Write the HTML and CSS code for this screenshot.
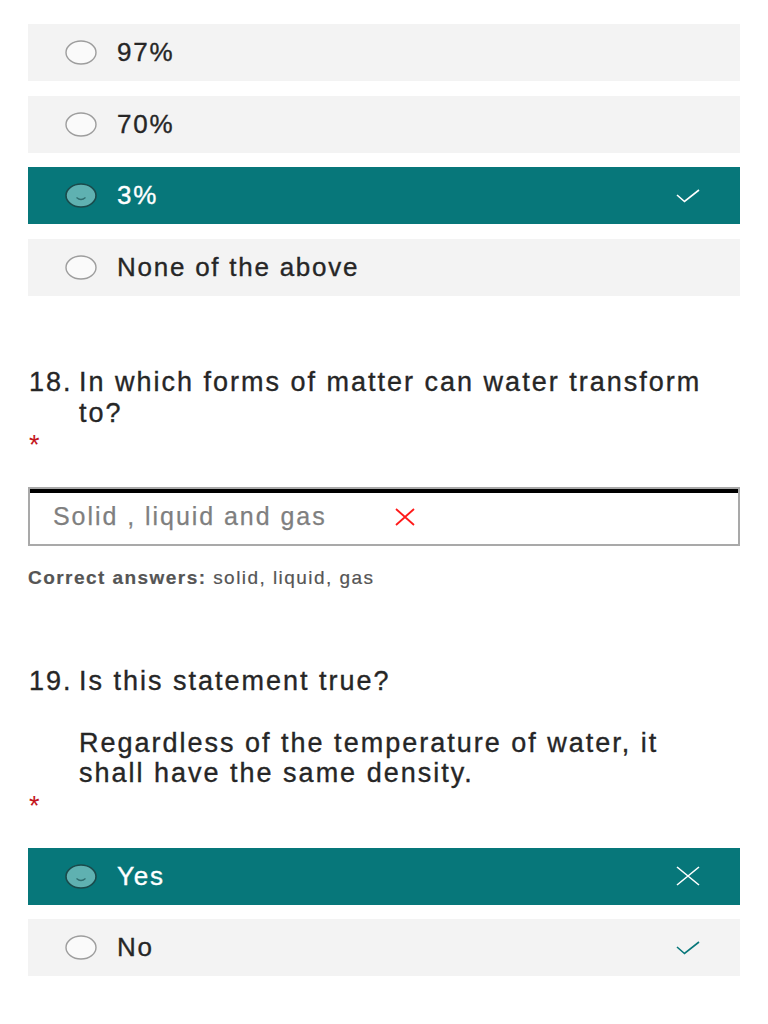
FILE: index.html
```html
<!DOCTYPE html>
<html lang="en">
<head>
<meta charset="utf-8">
<title>Quiz results</title>
<link rel="stylesheet" href="styles.css">
</head>
<body>
<div class="page">
  <div class="options">
    <div class="option">
      <svg class="radio" viewBox="0 0 32 25"><ellipse cx="16" cy="12.5" rx="15" ry="11.5" class="radio-off"/></svg>
      <span class="label">97%</span>
    </div>
    <div class="option">
      <svg class="radio" viewBox="0 0 32 25"><ellipse cx="16" cy="12.5" rx="15" ry="11.5" class="radio-off"/></svg>
      <span class="label">70%</span>
    </div>
    <div class="option selected">
      <svg class="radio" viewBox="0 0 32 25"><ellipse cx="16" cy="12.5" rx="15" ry="11.5" class="radio-on"/><path d="M11.5 14.5 Q16 18.5 20.5 14.5" class="radio-mark"/></svg>
      <span class="label">3%</span>
      <svg class="mark" viewBox="0 0 24 14"><path d="M1 6 L8.5 12.5 L23 1" class="stroke-white"/></svg>
    </div>
    <div class="option">
      <svg class="radio" viewBox="0 0 32 25"><ellipse cx="16" cy="12.5" rx="15" ry="11.5" class="radio-off"/></svg>
      <span class="label">None of the above</span>
    </div>
  </div>

  <div class="question q18">
    <span class="num">18.</span>
    <div class="qtext">In which forms of matter can water transform to?</div>
  </div>
  <div class="required">*</div>

  <div class="answer-box">
    <span class="answer-text">Solid , liquid and gas</span>
    <svg class="wrong" viewBox="0 0 20 18"><path d="M1 1 L19 17 M19 1 L1 17" class="stroke-red"/></svg>
  </div>
  <div class="correct"><b>Correct answers:</b> solid, liquid, gas</div>

  <div class="question q19">
    <span class="num">19.</span>
    <div class="qtext">
      <p>Is this statement true?</p>
      <p class="statement">Regardless of the temperature of water, it shall have the same density.</p>
    </div>
  </div>
  <div class="required">*</div>

  <div class="options options-q19">
    <div class="option selected">
      <svg class="radio" viewBox="0 0 32 25"><ellipse cx="16" cy="12.5" rx="15" ry="11.5" class="radio-on"/><path d="M11.5 14.5 Q16 18.5 20.5 14.5" class="radio-mark"/></svg>
      <span class="label">Yes</span>
      <svg class="mark mark-x" viewBox="0 0 24 20"><path d="M1 1 L23 19 M23 1 L1 19" class="stroke-white"/></svg>
    </div>
    <div class="option">
      <svg class="radio" viewBox="0 0 32 25"><ellipse cx="16" cy="12.5" rx="15" ry="11.5" class="radio-off"/></svg>
      <span class="label">No</span>
      <svg class="mark" viewBox="0 0 24 14"><path d="M1 6 L8.5 12.5 L23 1" class="stroke-teal"/></svg>
    </div>
  </div>
</div>
</body>
</html>
```

FILE: styles.css
```css
html, body {
  margin: 0;
  padding: 0;
  background: #ffffff;
}

body {
  font-family: "Liberation Sans", Arial, sans-serif;
  color: #262626;
}

.page {
  padding: 24px 28px 40px;
}

.options {
  display: flex;
  flex-direction: column;
  gap: 14.7px;
}

.option {
  height: 57px;
  background: #f3f3f3;
  display: flex;
  align-items: center;
  padding: 0 40px 0 37px;
}

.option.selected {
  background: #07777a;
  color: #ffffff;
}

.radio {
  width: 32px;
  height: 25px;
  flex: none;
  margin-right: 20px;
}

.radio-off {
  fill: #fafafa;
  stroke: #9d9d9d;
  stroke-width: 1.4;
}

.radio-on {
  fill: #5fb1b1;
  stroke: #1a4a4b;
  stroke-width: 1.6;
}

.radio-mark {
  fill: none;
  stroke: #2f6e6f;
  stroke-width: 1.2;
}

.label {
  font-size: 26px;
  letter-spacing: 1.75px;
  -webkit-text-stroke: 0.35px currentColor;
  flex: 1;
}

.mark {
  width: 24px;
  height: 14px;
  flex: none;
}

.mark-x {
  height: 20px;
}

.stroke-white {
  fill: none;
  stroke: #ffffff;
  stroke-width: 1.6;
}

.stroke-teal {
  fill: none;
  stroke: #07777a;
  stroke-width: 1.6;
}

.stroke-red {
  fill: none;
  stroke: #ff1a1a;
  stroke-width: 1.8;
}

.question {
  display: flex;
  font-size: 27px;
  letter-spacing: 2px;
  line-height: 30.5px;
  -webkit-text-stroke: 0.35px currentColor;
}

.q18 {
  margin-top: 71px;
}

.q19 {
  margin-top: 77px;
}

.num {
  width: 50px;
  flex: none;
  padding-left: 1px;
}

.qtext {
  flex: 1;
  padding-right: 20px;
}

.qtext p {
  margin: 0;
}

.qtext .statement {
  margin-top: 31px;
}

.required {
  color: #c4161c;
  font-size: 27px;
  line-height: 22px;
  height: 22px;
  margin-top: 6px;
  padding-left: 1px;
}

.answer-box {
  margin-top: 31px;
  height: 55px;
  border: 2px solid #a9a9a9;
  box-shadow: inset 0 4px 0 #000000;
  display: flex;
  align-items: center;
  padding: 0 0 0 23px;
}

.answer-text {
  font-size: 25px;
  letter-spacing: 1.95px;
  color: #7f7f7f;
  -webkit-text-stroke: 0.25px currentColor;
}

.wrong {
  width: 20px;
  height: 18px;
  margin-left: 68px;
  flex: none;
}

.correct {
  margin-top: 21px;
  font-size: 19px;
  line-height: 22px;
  letter-spacing: 1.45px;
  color: #555555;
  -webkit-text-stroke: 0.2px currentColor;
}

.correct b {
  font-weight: bold;
}

.options-q19 {
  margin-top: 31px;
}
```
